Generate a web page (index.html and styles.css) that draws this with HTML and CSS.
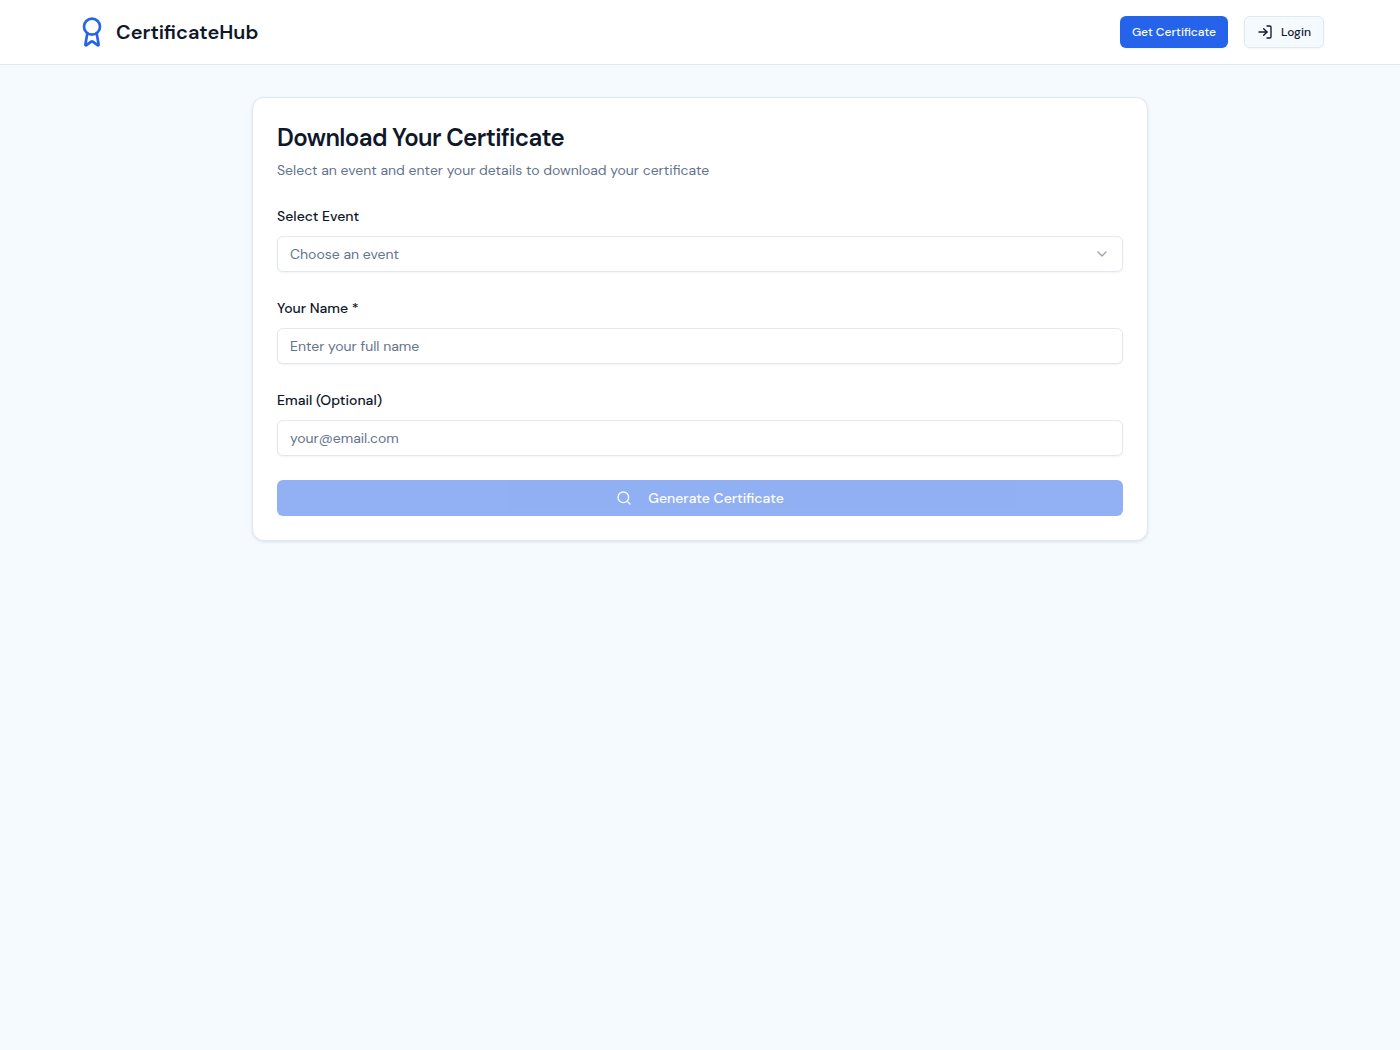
FILE: index.html
```html
<!DOCTYPE html>
<html lang="en">
  <head>
    <title>CertificateHub</title>
    <meta charset="utf-8">
    <meta name="viewport" content="width=device-width, initial-scale=1">
    <link rel="stylesheet" href="styles.css">
  </head>
  <body>

  <header class="site-header">
    <div class="container">
      <a class="brand" href="#">
        <svg class="brand-icon" viewBox="0 0 24 24" aria-hidden="true">
          <path d="m15.477 12.89 1.515 8.526a.5.5 0 0 1-.81.47l-3.58-2.687a1 1 0 0 0-1.197 0l-3.586 2.686a.5.5 0 0 1-.81-.469l1.514-8.526"/>
          <circle cx="12" cy="8" r="6"/>
        </svg>
        <span>CertificateHub</span>
      </a>
      <nav class="actions">
        <a class="btn btn-small btn-primary" href="#download">Get Certificate</a>
        <a class="btn btn-small btn-outline" href="#login">
          <svg class="icon" viewBox="0 0 24 24" aria-hidden="true">
            <path d="M15 3h4a2 2 0 0 1 2 2v14a2 2 0 0 1-2 2h-4"/>
            <path d="m10 17 5-5-5-5"/>
            <path d="M15 12H3"/>
          </svg>
          Login
        </a>
      </nav>
    </div>
  </header>

  <main>
    <section class="card" id="download">
      <div class="card-header">
        <h1>Download Your Certificate</h1>
        <p>Select an event and enter your details to download your certificate</p>
      </div>

      <form class="form">
        <div class="field">
          <label for="event">Select Event</label>
          <div class="select">
            <select id="event" name="event">
              <option value="">Choose an event</option>
            </select>
            <svg class="icon chevron" viewBox="0 0 24 24" aria-hidden="true">
              <path d="m6 9 6 6 6-6"/>
            </svg>
          </div>
        </div>
        <div class="field">
          <label for="name">Your Name *</label>
          <input id="name" name="name" type="text" placeholder="Enter your full name">
        </div>
        <div class="field">
          <label for="email">Email (Optional)</label>
          <input id="email" name="email" type="email" placeholder="your@email.com">
        </div>
        <button class="btn btn-primary btn-submit" type="submit" disabled>
          <svg class="icon" viewBox="0 0 24 24" aria-hidden="true">
            <circle cx="11" cy="11" r="8"/>
            <path d="m21 21-4.300-4.300"/>
          </svg>
          Generate Certificate
        </button>
      </form>
    </section>
  </main>

  </body>
</html>
```

FILE: styles.css
```css
* {
  box-sizing: border-box;
}

body {
  margin: 0;
  min-height: 100vh;
  background: #f5faff;
  color: #0f172a;
  font-family: "DM Sans", Inter, "Liberation Sans", sans-serif;
  font-size: 16px;
  line-height: 24px;
}

a {
  color: inherit;
  text-decoration: none;
}

.site-header {
  background: #fff;
  border-bottom: 1px solid #e2e8f0;
}

.container {
  display: flex;
  align-items: center;
  justify-content: space-between;
  max-width: 1280px;
  margin: 0 auto;
  padding: 16px;
}

.brand {
  display: flex;
  align-items: center;
  gap: 8px;
  font-size: 20px;
  font-weight: 600;
  line-height: 28px;
}

svg {
  flex: none;
  fill: none;
  stroke: currentColor;
  stroke-width: 2;
  stroke-linecap: round;
  stroke-linejoin: round;
}

.brand-icon {
  width: 32px;
  height: 32px;
  color: #2563eb;
}

.icon {
  width: 16px;
  height: 16px;
}

.actions {
  display: flex;
  gap: 16px;
}

.btn {
  display: flex;
  align-items: center;
  justify-content: center;
  border: 0;
  border-radius: 6px;
  font-family: inherit;
  font-weight: 500;
}

.btn-small {
  gap: 8px;
  height: 32px;
  padding: 0 12px;
  font-size: 12px;
  box-shadow: 0 1px 2px rgba(0,0,0,0.05);
}

.btn-primary {
  background: #2563eb;
  color: #f8fafc;
}

.btn-outline {
  background: #f5faff;
  border: 1px solid #e2e8f0;
}

main {
  max-width: 928px;
  margin: 0 auto;
  padding: 32px 16px;
}

.card {
  background: #fff;
  border: 1px solid #e2e8f0;
  border-radius: 12px;
  box-shadow: 0 1px 3px rgba(0,0,0,0.1);
}

.card-header {
  display: flex;
  flex-direction: column;
  gap: 6px;
  padding: 24px;
}

h1 {
  margin: 0;
  font-size: 24px;
  font-weight: 600;
  line-height: 32px;
  letter-spacing: -0.025em;
}

.card-header p {
  margin: 0;
  color: #64748b;
  font-size: 14px;
  line-height: 20px;
}

.form {
  display: flex;
  flex-direction: column;
  gap: 24px;
  padding: 0 24px 24px;
}

.field {
  display: flex;
  flex-direction: column;
  gap: 8px;
}

label {
  font-size: 14px;
  font-weight: 500;
}

input,
select {
  width: 100%;
  height: 36px;
  padding: 0 12px;
  background: #fff;
  border: 1px solid #e2e8f0;
  border-radius: 6px;
  box-shadow: 0 1px 2px rgba(0,0,0,0.05);
  color: inherit;
  font-family: inherit;
  font-size: 14px;
}

select {
  display: block;
  appearance: none;
  color: #64748b;
}

input::placeholder {
  color: #64748b;
}

.select {
  position: relative;
}

.chevron {
  position: absolute;
  top: 10px;
  right: 13px;
  opacity: 0.4;
  pointer-events: none;
}

.btn-submit {
  gap: 16px;
  height: 36px;
  font-size: 14px;
}

.btn:disabled {
  opacity: 0.5;
}
```
